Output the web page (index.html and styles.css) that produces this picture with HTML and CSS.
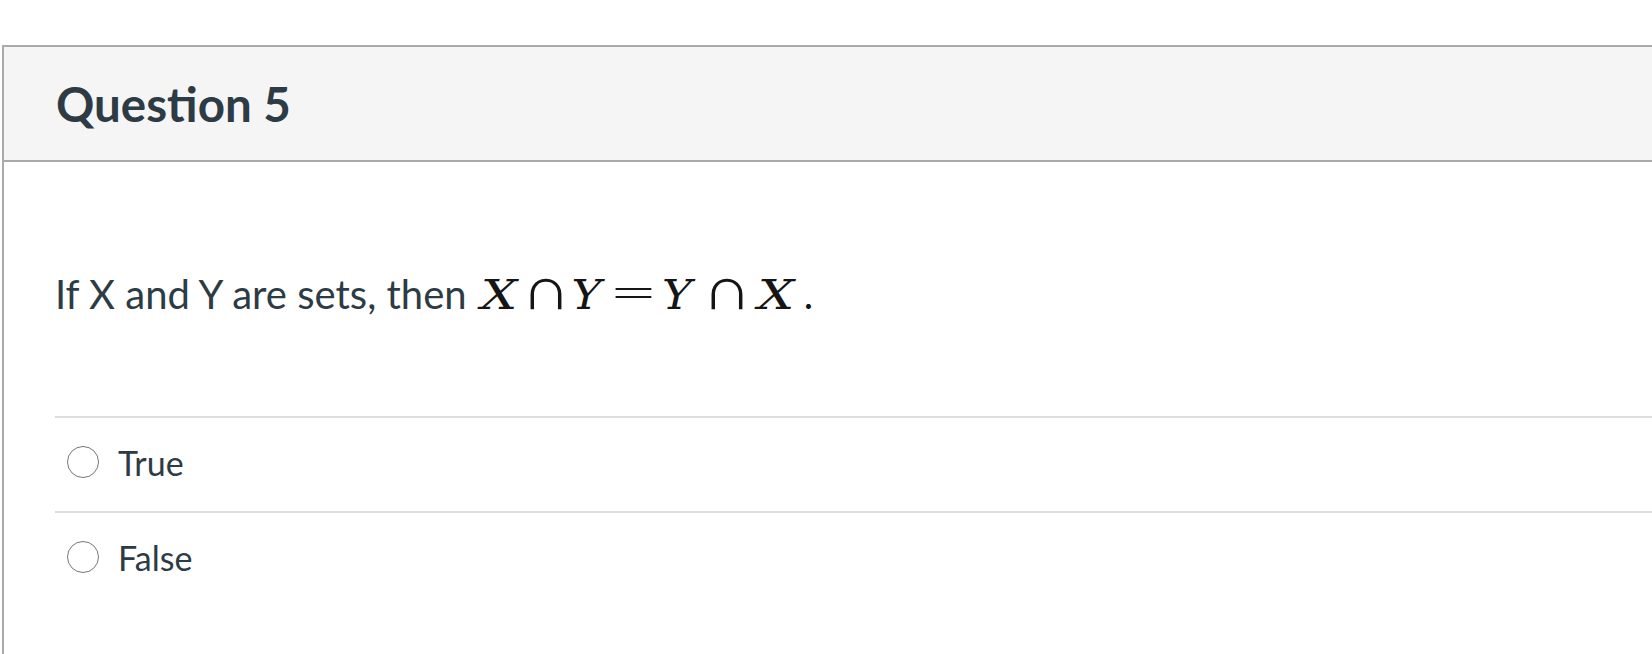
FILE: index.html
```html
<!DOCTYPE html>
<html>
<head>
<meta charset="utf-8">
<link rel="stylesheet" href="styles.css">
</head>
<body>
<div class="question">
  <div class="header"><h2 class="title">Question 5</h2></div>
  <div class="content">
    <div class="text">If X and Y are sets, then <span class="math"><span class="mi mx x1">X</span><span class="mo cap1">∩</span><span class="mi my y1">Y</span><span class="rel">=</span><span class="mi my y2">Y</span><span class="mo cap2">∩</span><span class="mi mx x2">X</span></span><span class="dot">.</span></div>
    <div class="answers">
      <label class="answer"><span class="radio"></span><span class="label">True</span></label>
      <label class="answer"><span class="radio"></span><span class="label">False</span></label>
    </div>
  </div>
</div>
</body>
</html>
```

FILE: styles.css
```css
html, body {
  margin: 0;
  padding: 0;
  background: #ffffff;
  overflow: hidden;
}
body {
  font-family: Lato, "Open Sans", sans-serif;
  color: #2d3b45;
}
.question {
  margin-top: 45px;
  margin-left: 2px;
  border-top: 2px solid #aaaaaa;
  border-left: 2px solid #aaaaaa;
  height: 620px;
}
.header {
  height: 113px;
  background: #f5f5f5;
  border-bottom: 2px solid #aaaaaa;
  display: flex;
  align-items: center;
  padding-left: 52px;
}
.title {
  margin: 0;
  font-size: 47.5px;
  font-weight: 700;
  line-height: 1;
}
.content {
  padding-left: 51px;
}
.text {
  font-size: 40px;
  line-height: 48px;
  padding-top: 106px;
  height: 148px;
  white-space: nowrap;
}
.math {
  font-family: "DejaVu Serif", "Liberation Serif", serif;
  font-size: 41px;
  color: #151515;
  margin-left: 7px;
}
.mi,
.mo,
.rel {
  display: inline-flex;
  justify-content: center;
}
.mi {
  font-style: italic;
}
.mx {
  transform: translateX(-3px) scaleX(1.25);
}
.my {
  transform: translateX(-3px) scaleX(1.1);
}
.x1 { width: 36px; }
.y1 { width: 37px; }
.y2 { width: 38px; }
.x2 { width: 34px; }
.mo {
  font-family: "DejaVu Sans", sans-serif;
  font-weight: 200;
  font-size: 60px;
  line-height: 40px;
  width: 26px;
  transform: scaleX(1.15);
}
.cap1 { margin: 0 12px 0 13px; }
.cap2 { margin: 0 22px 0 15px; }
.rel {
  font-family: "DejaVu Sans", sans-serif;
  font-weight: 200;
  font-size: 52px;
  line-height: 40px;
  width: 33px;
  margin: 0 11px 0 9px;
  transform: scaleX(1.1);
}
.dot {
  color: #151515;
  margin-left: 8px;
}
.answers {
  display: flex;
  flex-direction: column;
}
.answer {
  display: flex;
  align-items: center;
  height: 88px;
  padding-bottom: 5px;
  border-top: 2px solid #dddddd;
  font-size: 34px;
}
.radio {
  width: 30px;
  height: 30px;
  border: 1.5px solid #777777;
  border-radius: 50%;
  margin-left: 12px;
  margin-right: 19px;
  flex: none;
}
```
